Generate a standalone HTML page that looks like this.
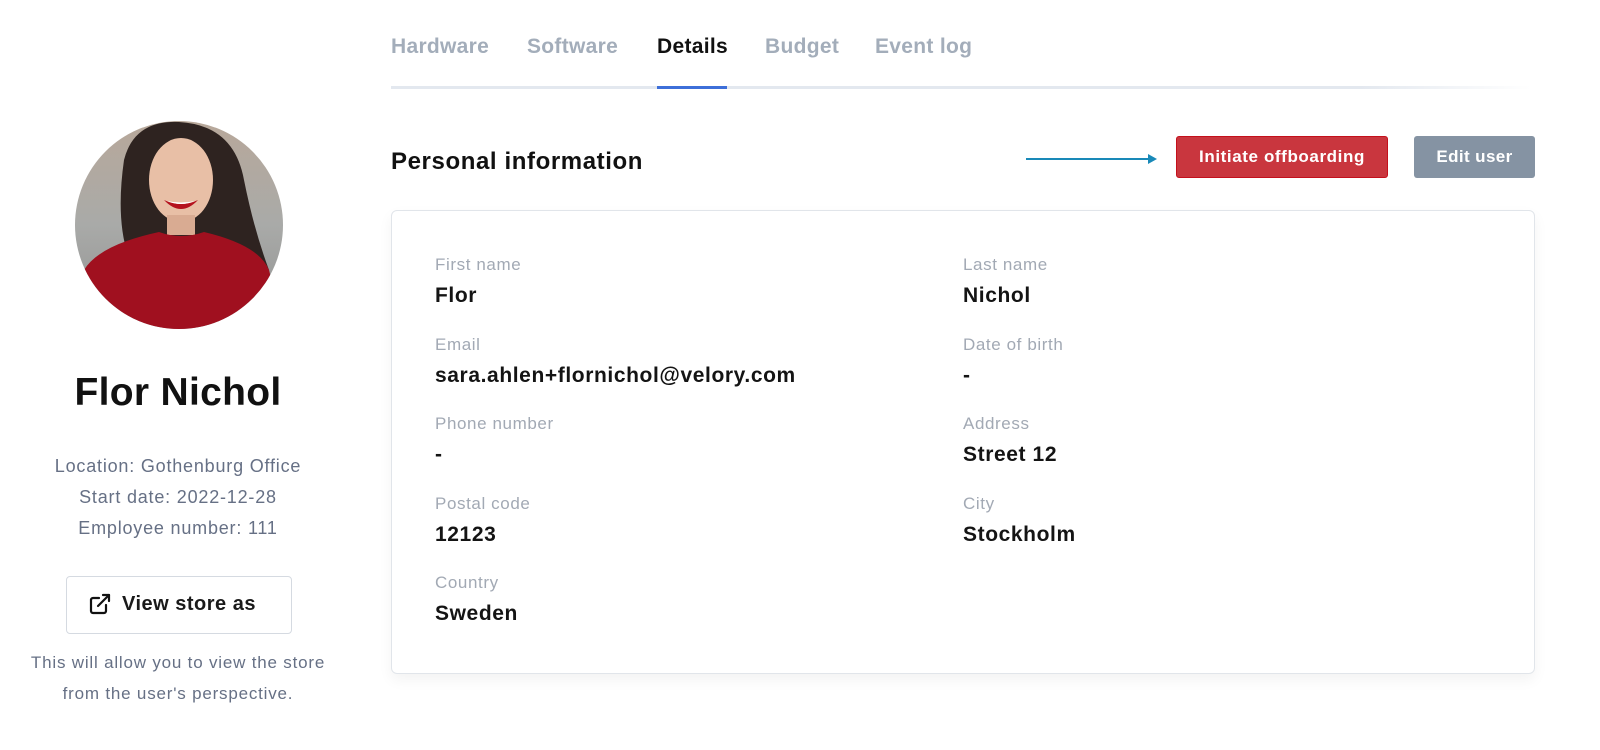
<!DOCTYPE html>
<html><head><meta charset="utf-8"><style>
*{margin:0;padding:0;box-sizing:border-box}
body{width:1600px;height:750px;background:#fff;font-family:"Liberation Sans",Arial,sans-serif;position:relative;overflow:hidden;color:#111}
.abs{position:absolute}
.tab{position:absolute;top:35px;font-size:21px;font-weight:bold;color:#a3adba;letter-spacing:0.3px}
.lab{position:absolute;font-size:17px;color:#a2a9b4;letter-spacing:0.6px}
.val{position:absolute;font-size:21px;color:#141414;font-weight:bold;letter-spacing:0.6px}
.info{position:absolute;left:0;width:356px;text-align:center;font-size:18px;color:#667085;letter-spacing:0.8px}
</style></head><body>
<div class="tab" style="left:391px">Hardware</div>
<div class="tab" style="left:527px">Software</div>
<div class="tab" style="left:657px;color:#111">Details</div>
<div class="tab" style="left:765px">Budget</div>
<div class="tab" style="left:875px">Event log</div>
<div class="abs" style="left:391px;top:86px;width:1140px;height:3px;background:linear-gradient(90deg,#e3e8ef 85%,#fff)"></div>
<div class="abs" style="left:657px;top:86px;width:70px;height:3px;background:#3d6fd9"></div>

<svg class="abs" style="left:74px;top:120px" width="210" height="210" viewBox="0 0 210 210">
<defs><clipPath id="c"><circle cx="105" cy="105" r="104"/></clipPath>
<linearGradient id="bg" x1="0" y1="0" x2="0" y2="1"><stop offset="0" stop-color="#b8a89a"/><stop offset=".5" stop-color="#a9aaa8"/><stop offset="1" stop-color="#8f9090"/></linearGradient></defs>
<g clip-path="url(#c)">
<rect width="210" height="210" fill="url(#bg)"/>
<path d="M50 40 Q60 0 105 2 Q160 5 170 60 Q180 110 195 150 L120 150 L60 150 Q40 110 50 40Z" fill="#2e2320"/>
<ellipse cx="107" cy="60" rx="32" ry="42" fill="#e8bfa6"/>
<path d="M90 80 Q107 98 124 80 Q107 88 90 80Z" fill="#b5121e"/>
<path d="M93 81 Q107 87 121 81 Q107 84 93 81Z" fill="#fff"/>
<rect x="93" y="95" width="28" height="20" fill="#d9ab92"/>
<path d="M0 210 L10 150 Q25 125 85 112 Q107 120 130 112 Q185 125 195 150 L210 210Z" fill="#a0101f"/>
</g></svg>

<div class="abs" style="left:0;top:371px;width:356px;text-align:center;font-size:39px;font-weight:bold;color:#111;letter-spacing:0.3px">Flor Nichol</div>
<div class="info" style="top:456px">Location: Gothenburg Office</div>
<div class="info" style="top:487px">Start date: 2022-12-28</div>
<div class="info" style="top:518px">Employee number: 111</div>
<div class="abs" style="left:66px;top:576px;width:226px;height:58px;border:1px solid #d5dae1;border-radius:4px"></div>
<svg class="abs" style="left:88px;top:592px" width="24" height="24" viewBox="0 0 24 24" fill="none" stroke="#111" stroke-width="2.2" stroke-linecap="round" stroke-linejoin="round"><path d="M18 13v6a2 2 0 0 1-2 2H5a2 2 0 0 1-2-2V8a2 2 0 0 1 2-2h6"/><path d="M15 3h6v6"/><path d="M10 14L21 3"/></svg>
<div class="abs" style="left:122px;top:593px;font-size:20px;font-weight:bold;color:#1a1a1a;letter-spacing:0.5px">View store as</div>
<div class="info" style="top:653px;font-size:17px;left:-2px;width:360px">This will allow you to view the store</div>
<div class="info" style="top:684px;font-size:17px">from the user's perspective.</div>

<div class="abs" style="left:391px;top:148px;font-size:24px;font-weight:bold;color:#111;letter-spacing:0.6px">Personal information</div>
<div class="abs" style="left:1026px;top:158px;width:124px;height:2px;background:#1989b8"></div>
<div class="abs" style="left:1148px;top:154px;width:0;height:0;border-left:9px solid #1989b8;border-top:5px solid transparent;border-bottom:5px solid transparent"></div>
<div class="abs" style="left:1176px;top:136px;width:212px;height:42px;background:#c9363e;border:1px solid #c4101c;border-radius:3px;color:#fff;font-size:17px;font-weight:bold;text-align:center;line-height:40px;letter-spacing:0.6px">Initiate offboarding</div>
<div class="abs" style="left:1414px;top:136px;width:121px;height:42px;background:#8593a3;border-radius:3px;color:#fff;font-size:17px;font-weight:bold;text-align:center;line-height:42px;letter-spacing:0.4px">Edit user</div>

<div class="abs" style="left:391px;top:210px;width:1144px;height:464px;border:1px solid #e1e5ea;border-radius:6px;box-shadow:0 6px 14px rgba(0,0,0,.05)"></div>
<div class="lab" style="left:435px;top:255px">First name</div><div class="val" style="left:435px;top:284px">Flor</div>
<div class="lab" style="left:963px;top:255px">Last name</div><div class="val" style="left:963px;top:284px">Nichol</div>
<div class="lab" style="left:435px;top:335px">Email</div><div class="val" style="left:435px;top:364px">sara.ahlen+flornichol@velory.com</div>
<div class="lab" style="left:963px;top:335px">Date of birth</div><div class="val" style="left:963px;top:364px">-</div>
<div class="lab" style="left:435px;top:414px">Phone number</div><div class="val" style="left:435px;top:443px">-</div>
<div class="lab" style="left:963px;top:414px">Address</div><div class="val" style="left:963px;top:443px">Street 12</div>
<div class="lab" style="left:435px;top:494px">Postal code</div><div class="val" style="left:435px;top:523px">12123</div>
<div class="lab" style="left:963px;top:494px">City</div><div class="val" style="left:963px;top:523px">Stockholm</div>
<div class="lab" style="left:435px;top:573px">Country</div><div class="val" style="left:435px;top:602px">Sweden</div>
</body></html>
